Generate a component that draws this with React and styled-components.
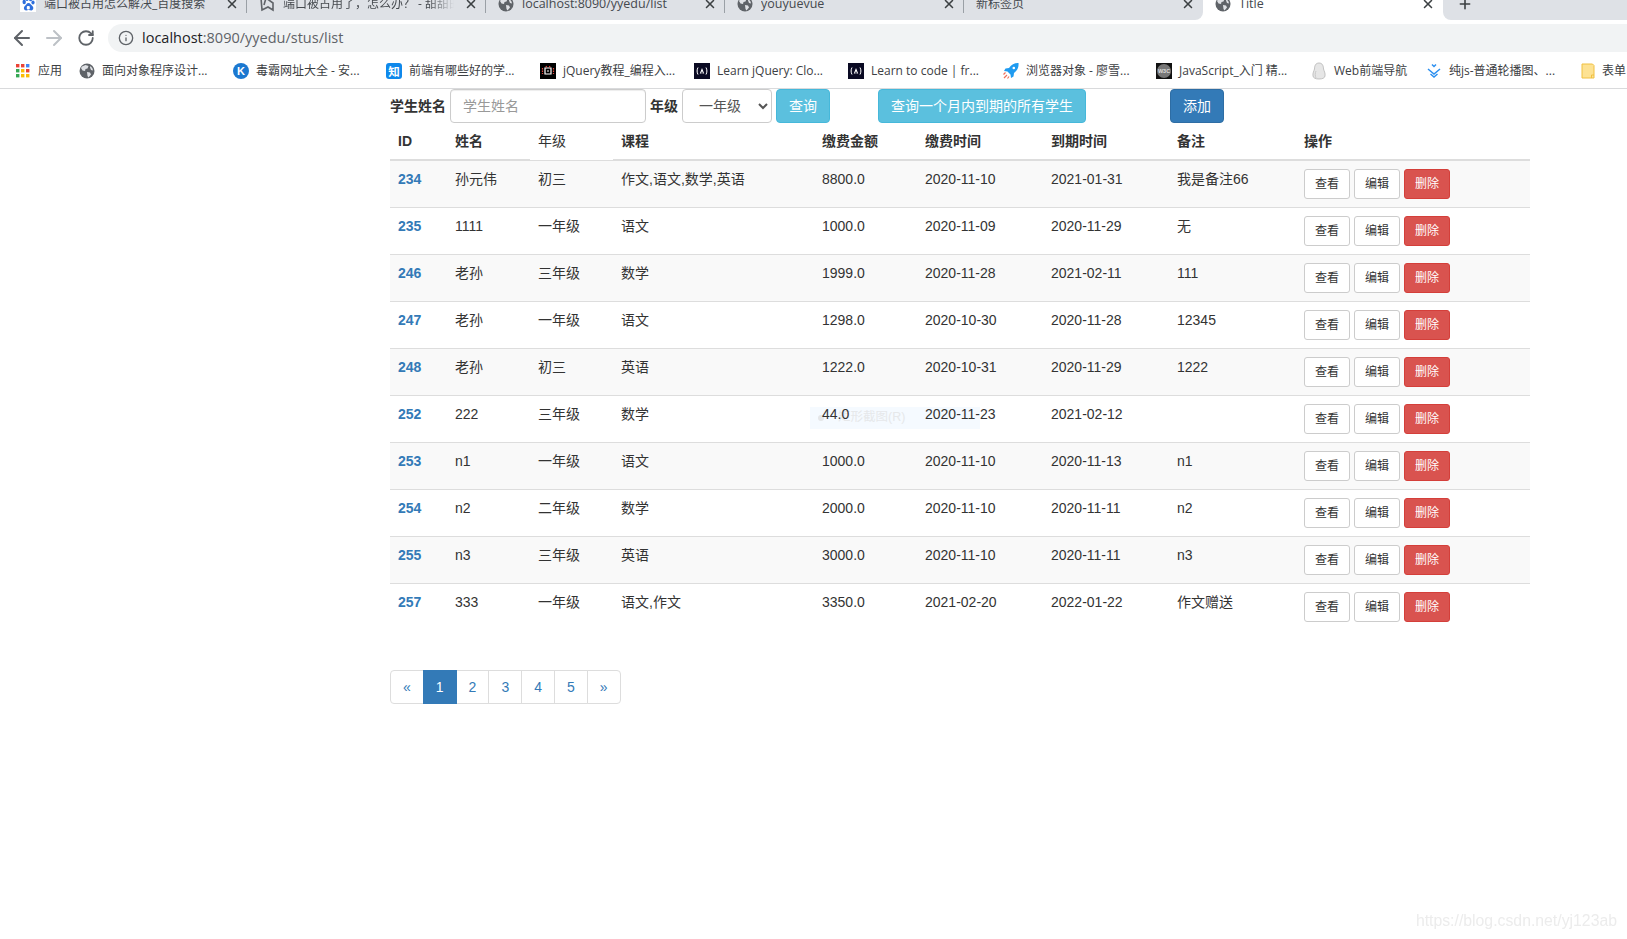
import React from 'react';
import styled, { createGlobalStyle } from 'styled-components';
import { ArrowLeft, ArrowRight, RotateCw, Info, X, Plus } from 'lucide-react';

const GlobalStyle = createGlobalStyle`
  html, body {
    margin: 0;
    padding: 0;
    background: #fff;
  }
  * {
    box-sizing: border-box;
  }
`;

const Page = styled.div`
  position: relative;
  width: 1627px;
  height: 939px;
  overflow: hidden;
  background: #fff;
  font-family: "Liberation Sans", "Noto Sans CJK SC", sans-serif;
  font-size: 14px;
  line-height: 20px;
  color: #333;
`;

// Browser chrome
const TabStrip = styled.div`
  display: flex;
  height: 20px;
  overflow: hidden;
  background: #fff;
  font-family: "Open Sans", "Noto Sans CJK SC", sans-serif;
  font-size: 12.5px;
  color: #45494e;
`;

const TabGroup = styled.div`
  display: flex;
  align-items: flex-start;
  padding-left: 8px;
  background: #dee1e6;
  border-bottom-right-radius: 8px;
`;

const Tab = styled.div`
  display: flex;
  align-items: center;
  flex: none;
  width: ${(props) => (props.$active ? '240px' : '239px')};
  height: 13px;
  padding: 0 7px 5px 12px;
  border-right: 1px solid ${(props) => (props.$last ? 'transparent' : '#9aa0a6')};
  background: ${(props) => (props.$active ? '#fff' : 'transparent')};
  white-space: nowrap;

  svg {
    flex: none;
  }
`;

const TabTitle = styled.span`
  flex: 1;
  min-width: 0;
  margin: 0 10px 0 ${(props) => (props.$noIcon ? 0 : '8px')};
  overflow: hidden;
  font-size: ${(props) => (props.$cjk ? '12px' : 'inherit')};
  ${(props) => props.$fade && 'mask-image: linear-gradient(to right, #000 85%, transparent 100%);'}
`;

const StripRest = styled.div`
  display: flex;
  align-items: flex-start;
  flex: 1;
  padding-left: 14px;
  background: #dee1e6;
  border-bottom-left-radius: 8px;
  color: #3c4043;

  svg {
    margin-top: -4px;
  }
`;

const Toolbar = styled.div`
  display: flex;
  align-items: center;
  height: 32px;
  padding: 4px 0 0 10px;
`;

const NavButton = styled.div`
  display: flex;
  justify-content: center;
  width: 24px;
  margin-right: 8px;
  color: ${(props) => (props.$disabled ? '#bdc1c6' : '#5f6368')};
`;

const Omnibox = styled.div`
  display: flex;
  align-items: center;
  flex: 1;
  height: 28px;
  margin-left: 2px;
  padding-left: 10px;
  background: #f1f3f4;
  border-radius: 14px 0 0 14px;
  font-family: "Open Sans", sans-serif;
  font-size: 14.5px;
  color: #5f6368;

  svg {
    margin-right: 8px;
  }

  b {
    font-weight: 400;
    color: #202124;
  }
`;

const BookmarkBar = styled.div`
  display: flex;
  align-items: center;
  height: 37px;
  padding: 1px 0 0 15px;
  border-bottom: 1px solid #d9dadc;
  font-family: "Open Sans", "Noto Sans CJK SC", sans-serif;
  font-size: 12px;
  color: #3c4043;
  white-space: nowrap;
`;

const Bookmark = styled.div`
  display: flex;
  align-items: center;
  flex: none;
  width: ${(props) => props.$width}px;

  svg {
    flex: none;
    margin-right: 7px;
  }
`;

// Page content
const Content = styled.div`
  position: relative;
  padding-left: 390px;
  width: 1530px;
`;

const FilterBar = styled.form`
  position: relative;
  z-index: 1;
  display: flex;
  align-items: center;
  height: 34px;
  margin: 0;
`;

const FilterLabel = styled.label`
  font-weight: 700;
  margin-left: ${(props) => props.$left || 0}px;
  margin-right: 4px;
`;

const TextInput = styled.input`
  width: 196px;
  height: 34px;
  padding: 6px 12px;
  border: 1px solid #ccc;
  border-radius: 4px;
  font: inherit;
  color: #555;
  box-shadow: inset 0 1px 1px rgba(0, 0, 0, 0.075);

  &::placeholder {
    color: #999;
  }
`;

const GradeSelect = styled.select`
  width: 90px;
  height: 34px;
  padding: 6px 12px;
  border: 1px solid #ccc;
  border-radius: 4px;
  background: #fff;
  font: inherit;
  color: #555;
`;

const buttonColors = {
  default: { bg: '#fff', border: '#ccc', color: '#333' },
  info: { bg: '#5bc0de', border: '#46b8da', color: '#fff' },
  primary: { bg: '#337ab7', border: '#2e6da4', color: '#fff' },
  danger: { bg: '#d9534f', border: '#d43f3a', color: '#fff' },
};

const Button = styled.button`
  flex: none;
  height: ${(props) => (props.$small ? '30px' : '34px')};
  margin-left: ${(props) => props.$left || 0}px;
  padding: ${(props) => (props.$small ? '5px 10px' : '6px 12px')};
  border: 1px solid ${(props) => buttonColors[props.$kind].border};
  border-radius: ${(props) => (props.$small ? '3px' : '4px')};
  background: ${(props) => buttonColors[props.$kind].bg};
  color: ${(props) => buttonColors[props.$kind].color};
  font-family: inherit;
  font-size: ${(props) => (props.$small ? '12px' : '14px')};
  line-height: ${(props) => (props.$small ? '18px' : '20px')};
`;

const Table = styled.table`
  position: relative;
  z-index: 1;
  width: 1140px;
  margin-bottom: 20px;
  table-layout: fixed;
  border-collapse: separate;
  border-spacing: 0;
`;

const HeadCell = styled.th`
  padding: 8px 8px ${(props) => (props.$plain ? '9px' : '8px')};
  text-align: left;
  vertical-align: bottom;
  font-weight: ${(props) => (props.$plain ? 400 : 700)};
  border-bottom: ${(props) => (props.$plain ? '1px' : '2px')} solid #ddd;
`;

const Row = styled.tr`
  background: ${(props) => (props.$striped ? '#f9f9f9' : 'transparent')};

  &:not(:last-child) td {
    border-bottom: 1px solid #ddd;
  }
`;

const Cell = styled.td`
  padding: 8px;
  vertical-align: top;
`;

const IdLink = styled.a`
  color: #337ab7;
  font-weight: 700;
  text-decoration: none;
`;

const Actions = styled.div`
  display: flex;
  gap: 4px;
`;

const Pagination = styled.ul`
  display: flex;
  margin: 40px 0 0;
  padding: 0;
  list-style: none;
`;

const PageItem = styled.li`
  margin-left: ${(props) => (props.$first ? 0 : '-1px')};
  padding: 6px 12px;
  border: 1px solid ${(props) => (props.$active ? '#337ab7' : '#ddd')};
  background: ${(props) => (props.$active ? '#337ab7' : '#fff')};
  color: ${(props) => (props.$active ? '#fff' : '#337ab7')};
  position: relative;
  z-index: ${(props) => (props.$active ? 2 : 'auto')};
  border-radius: ${(props) =>
    props.$first ? '4px 0 0 4px' : props.$end ? '0 4px 4px 0' : '0'};
`;

// Leftover of a screenshot tool menu, lies under the table text
const SnipHint = styled.div`
  position: absolute;
  left: 810px;
  top: 318px;
  display: flex;
  align-items: center;
  width: 170px;
  height: 22px;
  padding: 0 0 2px 28px;
  background: #f5faff;
  font-size: 12.5px;
  color: #e6e8ea;

  &::before {
    content: '';
    position: absolute;
    left: 8px;
    top: 8px;
    width: 6px;
    height: 6px;
    border-radius: 50%;
    background: #e4e6e8;
  }
`;

const Watermark = styled.div`
  position: absolute;
  right: 10px;
  bottom: 8px;
  font-size: 15.8px;
  color: #ececec;
  filter: blur(0.4px);
`;

// Icons
const Globe = () => (
  <svg width="16" height="16" viewBox="0 0 16 16">
    <circle cx="8" cy="8" r="7.5" fill="#5f6368" />
    <path d="M3 3.5 6.5 2l3 1-1 2.5-2 .5-.5 2-2.5-.5L2 5zM8 9l3 .5 1 2-2.5 3-1-1.5zM11.500 3l2 2.500.5 2-2-.5-1-2.500z" fill="#dfe1e5" />
  </svg>
);

const BaiduIcon = () => (
  <svg width="16" height="16" viewBox="0 0 16 16">
    <rect width="16" height="16" fill="#fff" />
    <g fill="#2f6fdc">
      <ellipse cx="4.2" cy="6" rx="1.7" ry="2.2" />
      <ellipse cx="7" cy="3" rx="1.6" ry="2.1" />
      <ellipse cx="10.6" cy="3.2" rx="1.6" ry="2.1" />
      <ellipse cx="13" cy="6.6" rx="1.6" ry="2" />
      <path d="M8.5 7c-2 0-2.2 2-3.6 3-1.6 1.2-1.2 4.5 1.4 4.4 1.200 0 1.600-.5 2.400-.4.900 0 1.300.5 2.600.4 2.400-.2 2.600-3.200 1-4.400C11 9 10.500 7 8.500 7z" />
    </g>
    <rect x="6.800" y="10" width="3" height="3.500" rx="1" fill="#fff" />
  </svg>
);

const PageIcon = () => (
  <svg width="16" height="16" viewBox="0 0 16 16" fill="none" stroke="#5f6368" strokeWidth="1.600">
    <path d="M2 2h5l7 5v7l-5-3-6 3z" />
    <path d="M7 2 5 9" />
  </svg>
);

const AppsIcon = () => {
  const colors = ['#ea4335', '#ea4335', '#4285f4', '#34a853', '#fbbc05', '#ea4335', '#34a853', '#fbbc05', '#fbbc05'];
  return (
    <svg width="16" height="14" viewBox="0 0 16 14">
      {colors.map((color, i) => (
        <rect key={i} x={1 + (i % 3) * 5} y={Math.floor(i / 3) * 5} width="3.400" height="3.400" fill={color} />
      ))}
    </svg>
  );
};

const KIcon = () => (
  <svg width="16" height="16" viewBox="0 0 16 16">
    <circle cx="8" cy="8" r="8" fill="#1b78d0" />
    <text x="8" y="12" textAnchor="middle" fontSize="11" fontWeight="700" fill="#fff" fontFamily="Liberation Sans">K</text>
  </svg>
);

const ZhihuIcon = () => (
  <svg width="16" height="16" viewBox="0 0 16 16">
    <rect width="16" height="16" rx="3" fill="#0f88eb" />
    <text x="8" y="12.500" textAnchor="middle" fontSize="11.500" fontWeight="700" fill="#fff" fontFamily="Noto Sans CJK SC">知</text>
  </svg>
);

const JqueryIcon = () => (
  <svg width="16" height="16" viewBox="0 0 16 16">
    <rect width="16" height="16" fill="#000" />
    <path d="M5 5h6v6H5z" fill="none" stroke="#fff" strokeWidth="1.200" />
    <path d="M2.500 5v6M13.500 5v6M6 3l1 2M10 3 9 5" stroke="#e8483f" strokeWidth="1.200" strokeDasharray="1.500 1" />
    <path d="M8 7v2" stroke="#fff" />
  </svg>
);

const CampIcon = () => (
  <svg width="16" height="16" viewBox="0 0 16 16">
    <rect width="16" height="16" fill="#0a0a23" />
    <path d="M4 4.500C2.800 6.500 2.800 9.500 4 11.500M12 4.500c1.200 2 1.200 5 0 7" fill="none" stroke="#fff" strokeWidth="1" />
    <path d="M8 5 10.200 10.500H5.800z" fill="#fff" />
    <path d="M8 8 9 10.500H7z" fill="#0a0a23" />
  </svg>
);

const RocketIcon = () => (
  <svg width="16" height="16" viewBox="0 0 16 16">
    <path d="M15.500 0c.4 4-1 7.500-4.500 10l-.5 3.500L8 15l-.5-3.500L4.500 8.500 1 8l1.500-2.500L6 5c2.500-3.500 5.500-5 9.500-5z" fill="#1f9bf0" />
    <circle cx="10.800" cy="5" r="1.300" fill="#fff" />
    <path d="M1 15l3-3M.5 11.500l2-2M4.500 15.500l1.500-2" stroke="#f0705a" strokeWidth="1.200" />
  </svg>
);

const W3cIcon = () => (
  <svg width="16" height="16" viewBox="0 0 16 16">
    <rect width="16" height="16" fill="#111" />
    <circle cx="8" cy="8" r="7" fill="#777" />
    <text x="8" y="10" textAnchor="middle" fontSize="5.500" fontWeight="700" fill="#ddd" fontFamily="Liberation Sans">W3C</text>
  </svg>
);

const PenguinIcon = () => (
  <svg width="16" height="18" viewBox="0 0 16 18">
    <path d="M8 1C4.500 1 3.500 4 3.500 7 3 9 1.500 11 2 14c.3 2 2.500 3 6 3s5.700-1 6-3c.5-3-1-5-1.500-7 0-3-1-6-4.500-6z" fill="#e6e6e6" stroke="#b5b5b5" strokeWidth=".8" />
    <path d="M5 9c-1 2-1 5 0 7" fill="none" stroke="#c9c9c9" />
  </svg>
);

const ChevronsIcon = () => (
  <svg width="16" height="16" viewBox="0 0 16 16" fill="none" stroke="#2b8ff0" strokeWidth="1.500">
    <path d="M6 1.500 8 3.500l2-2M2 6l6 5 6-5M4.500 11 8 14l3.500-3" />
  </svg>
);

const NoteIcon = () => (
  <svg width="14" height="16" viewBox="0 0 14 16">
    <path d="M1 1h10.500l1.500 1.500V15H1z" fill="#fde293" stroke="#f0c040" strokeWidth="1" />
    <path d="M10.500 15v-3h2.500" fill="none" stroke="#f0c040" />
  </svg>
);

const tabs = [
  { title: '端口被占用怎么解决_百度搜索', icon: <BaiduIcon />, cjk: true },
  { title: '端口被占用了，怎么办？ - 甜甜的', icon: <PageIcon />, fade: true, cjk: true },
  { title: 'localhost:8090/yyedu/list', icon: <Globe /> },
  { title: 'youyuevue', icon: <Globe /> },
];

const bookmarks = [
  { width: 64, label: '应用', icon: <AppsIcon /> },
  { width: 154, label: '面向对象程序设计...', icon: <Globe /> },
  { width: 153, label: '毒霸网址大全 - 安...', icon: <KIcon /> },
  { width: 154, label: '前端有哪些好的学...', icon: <ZhihuIcon /> },
  { width: 154, label: 'jQuery教程_编程入...', icon: <JqueryIcon /> },
  { width: 154, label: 'Learn jQuery: Clo...', icon: <CampIcon /> },
  { width: 155, label: 'Learn to code | fr...', icon: <CampIcon /> },
  { width: 153, label: '浏览器对象 - 廖雪...', icon: <RocketIcon /> },
  { width: 155, label: 'JavaScript_入门 精...', icon: <W3cIcon /> },
  { width: 115, label: 'Web前端导航', icon: <PenguinIcon /> },
  { width: 155, label: '纯js-普通轮播图、...', icon: <ChevronsIcon /> },
  { width: 60, label: '表单', icon: <NoteIcon /> },
];

const columns = [
  { label: 'ID', width: 57 },
  { label: '姓名', width: 83 },
  { label: '年级', width: 83, plain: true },
  { label: '课程', width: 201 },
  { label: '缴费金额', width: 103 },
  { label: '缴费时间', width: 126 },
  { label: '到期时间', width: 126 },
  { label: '备注', width: 127 },
  { label: '操作', width: 234 },
];

const students = [
  [234, '孙元伟', '初三', '作文,语文,数学,英语', '8800.0', '2020-11-10', '2021-01-31', '我是备注66'],
  [235, '1111', '一年级', '语文', '1000.0', '2020-11-09', '2020-11-29', '无'],
  [246, '老孙', '三年级', '数学', '1999.0', '2020-11-28', '2021-02-11', '111'],
  [247, '老孙', '一年级', '语文', '1298.0', '2020-10-30', '2020-11-28', '12345'],
  [248, '老孙', '初三', '英语', '1222.0', '2020-10-31', '2020-11-29', '1222'],
  [252, '222', '三年级', '数学', '44.0', '2020-11-23', '2021-02-12', ''],
  [253, 'n1', '一年级', '语文', '1000.0', '2020-11-10', '2020-11-13', 'n1'],
  [254, 'n2', '二年级', '数学', '2000.0', '2020-11-10', '2020-11-11', 'n2'],
  [255, 'n3', '三年级', '英语', '3000.0', '2020-11-10', '2020-11-11', 'n3'],
  [257, '333', '一年级', '语文,作文', '3350.0', '2021-02-20', '2022-01-22', '作文赠送'],
];

const pages = ['«', '1', '2', '3', '4', '5', '»'];

export default function App() {
  return (
    <Page>
      <GlobalStyle />
      <TabStrip>
        <TabGroup>
          {tabs.map((tab) => (
            <Tab key={tab.title}>
              {tab.icon}
              <TabTitle $fade={tab.fade} $cjk={tab.cjk}>{tab.title}</TabTitle>
              <X size={14} strokeWidth={2.6} color="#3c4043" />
            </Tab>
          ))}
          <Tab $last>
            <TabTitle $noIcon $cjk>新标签页</TabTitle>
            <X size={14} strokeWidth={2.6} color="#3c4043" />
          </Tab>
        </TabGroup>
        <Tab $active $last>
          <Globe />
          <TabTitle>Title</TabTitle>
          <X size={14} strokeWidth={2.6} color="#3c4043" />
        </Tab>
        <StripRest>
          <Plus size={16} strokeWidth={2.4} />
        </StripRest>
      </TabStrip>

      <Toolbar>
        <NavButton><ArrowLeft size={24} strokeWidth={2} /></NavButton>
        <NavButton $disabled><ArrowRight size={24} strokeWidth={2} /></NavButton>
        <NavButton><RotateCw size={18} strokeWidth={2.4} /></NavButton>
        <Omnibox>
          <Info size={16} strokeWidth={2} color="#5f6368" />
          <span><b>localhost</b>:8090/yyedu/stus/list</span>
        </Omnibox>
      </Toolbar>

      <BookmarkBar>
        {bookmarks.map((item) => (
          <Bookmark key={item.label} $width={item.width}>
            {item.icon}
            <span>{item.label}</span>
          </Bookmark>
        ))}
      </BookmarkBar>

      <Content>
        <SnipHint>矩形截图(R)</SnipHint>
        <FilterBar>
          <FilterLabel>学生姓名</FilterLabel>
          <TextInput placeholder="学生姓名" />
          <FilterLabel $left={4}>年级</FilterLabel>
          <GradeSelect defaultValue="一年级">
            <option>一年级</option>
            <option>二年级</option>
            <option>三年级</option>
            <option>初三</option>
          </GradeSelect>
          <Button type="button" $kind="info" $left={4}>查询</Button>
          <Button type="button" $kind="info" $left={48}>查询一个月内到期的所有学生</Button>
          <Button type="button" $kind="primary" $left={84}>添加</Button>
        </FilterBar>

        <Table>
          <colgroup>
            {columns.map((col) => (
              <col key={col.label} width={col.width} />
            ))}
          </colgroup>
          <thead>
            <tr>
              {columns.map((col) => (
                <HeadCell key={col.label} $plain={col.plain}>{col.label}</HeadCell>
              ))}
            </tr>
          </thead>
          <tbody>
            {students.map(([id, ...fields], index) => (
              <Row key={id} $striped={index % 2 === 0}>
                <Cell><IdLink href="#">{id}</IdLink></Cell>
                {fields.map((value, i) => (
                  <Cell key={i}>{value}</Cell>
                ))}
                <Cell>
                  <Actions>
                    <Button type="button" $small $kind="default">查看</Button>
                    <Button type="button" $small $kind="default">编辑</Button>
                    <Button type="button" $small $kind="danger">删除</Button>
                  </Actions>
                </Cell>
              </Row>
            ))}
          </tbody>
        </Table>

        <Pagination>
          {pages.map((label, i) => (
            <PageItem key={label} $first={i === 0} $end={i === pages.length - 1} $active={label === '1'}>
              {label}
            </PageItem>
          ))}
        </Pagination>
      </Content>

      <Watermark>https://blog.csdn.net/yj123ab</Watermark>
    </Page>
  );
}
